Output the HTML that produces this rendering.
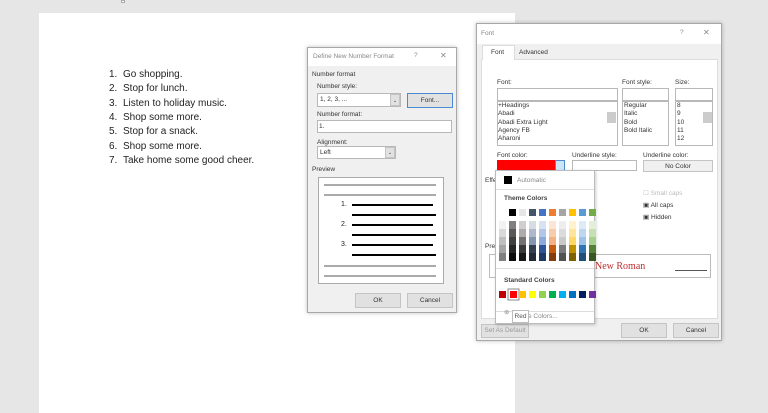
<!DOCTYPE html>
<html><head><meta charset="utf-8"><style>
*{margin:0;padding:0;box-sizing:border-box}
body{width:768px;height:402px;overflow:hidden;background:#e6e6e6;font-family:"Liberation Sans",sans-serif;position:relative;font-size:6.5px;color:#333}
.a{position:absolute}
.page{left:39px;top:13px;width:476px;height:400px;background:#fff}
.li{position:absolute;left:109px;font-size:10px;color:#222}
.li span{position:absolute;left:14px;white-space:nowrap}
.dlg{background:#f0f0f0;border:1px solid #a8a8a8;box-shadow:0 0 4px rgba(0,0,0,.25)}
.inp{background:#fff;border:1px solid #b8b8b8}
.btn{background:#e1e1e1;border:1px solid #c4c4c4;text-align:center;color:#333}
.t{white-space:nowrap;position:absolute}
.ln{position:absolute;height:2px;background:#000}
.gl{position:absolute;height:2px;background:#aaa}
</style></head><body>
<div class="a page"></div>
<div class="a" style="left:121px;top:0;width:4px;height:3px;border:1px solid #aaa;background:#fff"></div>
<div class="li" style="top:69px">1.<span>Go shopping.</span></div>
<div class="li" style="top:83px">2.<span>Stop for lunch.</span></div>
<div class="li" style="top:98px">3.<span>Listen to holiday music.</span></div>
<div class="li" style="top:112px">4.<span>Shop some more.</span></div>
<div class="li" style="top:126px">5.<span>Stop for a snack.</span></div>
<div class="li" style="top:141px">6.<span>Shop some more.</span></div>
<div class="li" style="top:155px">7.<span>Take home some good cheer.</span></div>

<div class="a dlg" style="left:307px;top:47px;width:150px;height:266px">
 <div class="a" style="left:0;top:0;width:148px;height:18px;background:#fff"></div>
 <div class="t" style="left:5px;top:5px;color:#888">Define New Number Format</div>
 <div class="t" style="left:106px;top:4px;color:#888">?</div>
 <div class="t" style="left:132px;top:3px;color:#888;font-size:8px">✕</div>
 <div class="t" style="left:4px;top:23px">Number format</div>
 <div class="t" style="left:9px;top:35px">Number style:</div>
 <div class="a inp" style="left:9px;top:45px;width:84px;height:14px"></div>
 <div class="t" style="left:12px;top:48px">1, 2, 3, ...</div>
 <div class="a btn" style="left:82px;top:46px;width:10px;height:12px;font-size:5px;line-height:12px">⌄</div>
 <div class="a btn" style="left:99px;top:45px;width:46px;height:15px;border-color:#4a8ad0;line-height:13px">Font...</div>
 <div class="t" style="left:9px;top:63px">Number format:</div>
 <div class="a inp" style="left:9px;top:72px;width:135px;height:13px"></div>
 <div class="t" style="left:11px;top:75px">1.</div>
 <div class="t" style="left:9px;top:91px">Alignment:</div>
 <div class="a inp" style="left:9px;top:98px;width:79px;height:13px"></div>
 <div class="t" style="left:12px;top:101px">Left</div>
 <div class="a btn" style="left:77px;top:99px;width:10px;height:11px;font-size:5px;line-height:11px">⌄</div>
 <div class="t" style="left:4px;top:118px">Preview</div>
 <div class="a" style="left:10px;top:129px;width:126px;height:107px;background:#fff;border:1px solid #aaa">
  <div class="gl" style="left:5px;top:6px;width:112px"></div>
  <div class="gl" style="left:5px;top:16px;width:112px"></div>
  <div class="t" style="left:22px;top:23px;font-size:7px;color:#222">1.</div>
  <div class="ln" style="left:33px;top:26px;width:81px"></div>
  <div class="ln" style="left:33px;top:36px;width:84px"></div>
  <div class="t" style="left:22px;top:43px;font-size:7px;color:#222">2.</div>
  <div class="ln" style="left:33px;top:46px;width:81px"></div>
  <div class="ln" style="left:33px;top:56px;width:84px"></div>
  <div class="t" style="left:22px;top:63px;font-size:7px;color:#222">3.</div>
  <div class="ln" style="left:33px;top:66px;width:81px"></div>
  <div class="ln" style="left:33px;top:76px;width:84px"></div>
  <div class="gl" style="left:5px;top:87px;width:112px"></div>
  <div class="gl" style="left:5px;top:97px;width:112px"></div>
 </div>
 <div class="a btn" style="left:47px;top:245px;width:46px;height:15px;line-height:13px">OK</div>
 <div class="a btn" style="left:99px;top:245px;width:46px;height:15px;line-height:13px">Cancel</div>
</div>

<div class="a dlg" style="left:476px;top:23px;width:246px;height:318px">
 <div class="a" style="left:0;top:0;width:244px;height:20px;background:#fff"></div>
 <div class="t" style="left:4px;top:6px;color:#888">Font</div>
 <div class="t" style="left:203px;top:5px;color:#888">?</div>
 <div class="t" style="left:226px;top:4px;color:#888;font-size:8px">✕</div>
 <div class="a" style="left:4px;top:35px;width:237px;height:260px;background:#fff;border:1px solid #ddd"></div>
 <div class="a" style="left:5px;top:21px;width:33px;height:15px;background:#fff;border:1px solid #ddd;border-bottom:none"></div>
 <div class="t" style="left:14px;top:25px">Font</div>
 <div class="t" style="left:42px;top:25px">Advanced</div>
 <div class="t" style="left:20px;top:55px">Font:</div>
 <div class="a inp" style="left:20px;top:64px;width:121px;height:13px"></div>
 <div class="a inp" style="left:20px;top:77px;width:121px;height:45px"></div>
 <div class="t" style="left:21px;top:78px;line-height:8.3px">+Headings<br>Abadi<br>Abadi Extra Light<br>Agency FB<br>Aharoni</div>
 <div class="a" style="left:130px;top:88px;width:9px;height:11px;background:#ccc"></div>
 <div class="t" style="left:145px;top:55px">Font style:</div>
 <div class="a inp" style="left:145px;top:64px;width:47px;height:13px"></div>
 <div class="a inp" style="left:145px;top:77px;width:47px;height:45px"></div>
 <div class="t" style="left:147px;top:78px;line-height:8.3px">Regular<br>Italic<br>Bold<br>Bold Italic</div>
 <div class="t" style="left:198px;top:55px">Size:</div>
 <div class="a inp" style="left:198px;top:64px;width:38px;height:13px"></div>
 <div class="a inp" style="left:198px;top:77px;width:38px;height:45px"></div>
 <div class="t" style="left:200px;top:78px;line-height:8.3px">8<br>9<br>10<br>11<br>12</div>
 <div class="a" style="left:226px;top:88px;width:9px;height:11px;background:#ccc"></div>
 <div class="t" style="left:20px;top:128px">Font color:</div>
 <div class="a" style="left:20px;top:136px;width:58px;height:11px;background:#f00"></div>
 <div class="a" style="left:78px;top:136px;width:10px;height:11px;background:#cde4f7;border:1px solid #4a8ad0"></div>
 <div class="t" style="left:95px;top:128px">Underline style:</div>
 <div class="a inp" style="left:95px;top:136px;width:65px;height:11px"></div>
 <div class="t" style="left:166px;top:128px">Underline color:</div>
 <div class="a btn" style="left:166px;top:136px;width:70px;height:12px;background:#f0f0f0;line-height:11px">No Color</div>
 <div class="t" style="left:8px;top:153px">Effe</div>
 <div class="t" style="left:8px;top:219px">Pre</div>
 <div class="t" style="left:166px;top:165px;color:#bbb">☐ Small caps</div>
 <div class="t" style="left:166px;top:177px">▣ All caps</div>
 <div class="t" style="left:166px;top:189px">▣ Hidden</div>
 <div class="a" style="left:12px;top:230px;width:222px;height:24px;background:#fff;border:1px solid #bbb"></div>
 <div class="t" style="left:118px;top:237px;font-family:'Liberation Serif',serif;font-size:10px;color:#c03030">New Roman</div>
 <div class="a" style="left:198px;top:246px;width:32px;height:1px;background:#555"></div>
 <div class="a btn" style="left:4px;top:300px;width:48px;height:14px;color:#999;line-height:12px">Set As Default</div>
 <div class="a btn" style="left:144px;top:299px;width:46px;height:15px;line-height:13px">OK</div>
 <div class="a btn" style="left:196px;top:299px;width:46px;height:15px;line-height:13px">Cancel</div>
</div>

<div class="a" style="left:495px;top:170px;width:100px;height:154px;background:#fff;border:1px solid #bbb;box-shadow:1px 1px 3px rgba(0,0,0,.2)">
 <div class="a" style="left:8px;top:5px;width:8px;height:8px;background:#000"></div>
 <div class="t" style="left:21px;top:6px;color:#888">Automatic</div>
 <div class="a" style="left:0;top:18px;width:98px;height:1px;background:#ddd"></div>
 <div class="t" style="left:8px;top:24px;font-weight:bold;color:#444">Theme Colors</div>
 <div class="a" style="left:0;top:140px;width:98px;height:1px;background:#ddd"></div>
 <div class="a" style="left:0;top:97px;width:98px;height:1px;background:#ddd"></div>
 <div class="t" style="left:8px;top:106px;font-weight:bold;color:#444">Standard Colors</div>
 <div class="t" style="left:8px;top:137px;color:#888">⊛</div>
 <div class="t" style="left:32px;top:142px;color:#888">e Colors...</div>
 <div class="a" style="left:16px;top:139px;width:17px;height:13px;background:#fff;border:1px solid #bbb;font-size:6.5px;text-align:center;line-height:11px;color:#555">Red</div>
 <svg class="a" style="left:0;top:0" width="100" height="140">
  <rect x="3" y="38" width="7" height="7" fill="#fff"/>
  <rect x="13" y="38" width="7" height="7" fill="#000"/>
  <rect x="23" y="38" width="7" height="7" fill="#e7e6e6"/>
  <rect x="33" y="38" width="7" height="7" fill="#44546a"/>
  <rect x="43" y="38" width="7" height="7" fill="#4472c4"/>
  <rect x="53" y="38" width="7" height="7" fill="#ed7d31"/>
  <rect x="63" y="38" width="7" height="7" fill="#a5a5a5"/>
  <rect x="73" y="38" width="7" height="7" fill="#ffc000"/>
  <rect x="83" y="38" width="7" height="7" fill="#5b9bd5"/>
  <rect x="93" y="38" width="7" height="7" fill="#70ad47"/>
  <g>
   <rect x="3" y="50" width="7" height="8" fill="#f2f2f2"/><rect x="3" y="58" width="7" height="8" fill="#d9d9d9"/><rect x="3" y="66" width="7" height="8" fill="#bfbfbf"/><rect x="3" y="74" width="7" height="8" fill="#a6a6a6"/><rect x="3" y="82" width="7" height="8" fill="#808080"/>
   <rect x="13" y="50" width="7" height="8" fill="#808080"/><rect x="13" y="58" width="7" height="8" fill="#595959"/><rect x="13" y="66" width="7" height="8" fill="#404040"/><rect x="13" y="74" width="7" height="8" fill="#262626"/><rect x="13" y="82" width="7" height="8" fill="#0d0d0d"/>
   <rect x="23" y="50" width="7" height="8" fill="#d0cece"/><rect x="23" y="58" width="7" height="8" fill="#aeabab"/><rect x="23" y="66" width="7" height="8" fill="#757171"/><rect x="23" y="74" width="7" height="8" fill="#3a3838"/><rect x="23" y="82" width="7" height="8" fill="#171616"/>
   <rect x="33" y="50" width="7" height="8" fill="#d6dce4"/><rect x="33" y="58" width="7" height="8" fill="#adb9ca"/><rect x="33" y="66" width="7" height="8" fill="#8496b0"/><rect x="33" y="74" width="7" height="8" fill="#333f4f"/><rect x="33" y="82" width="7" height="8" fill="#222a35"/>
   <rect x="43" y="50" width="7" height="8" fill="#d9e2f3"/><rect x="43" y="58" width="7" height="8" fill="#b4c6e7"/><rect x="43" y="66" width="7" height="8" fill="#8eaadb"/><rect x="43" y="74" width="7" height="8" fill="#2f5496"/><rect x="43" y="82" width="7" height="8" fill="#1f3864"/>
   <rect x="53" y="50" width="7" height="8" fill="#fbe5d5"/><rect x="53" y="58" width="7" height="8" fill="#f7cbac"/><rect x="53" y="66" width="7" height="8" fill="#f4b183"/><rect x="53" y="74" width="7" height="8" fill="#c55a11"/><rect x="53" y="82" width="7" height="8" fill="#833c0b"/>
   <rect x="63" y="50" width="7" height="8" fill="#ededed"/><rect x="63" y="58" width="7" height="8" fill="#dbdbdb"/><rect x="63" y="66" width="7" height="8" fill="#c9c9c9"/><rect x="63" y="74" width="7" height="8" fill="#7b7b7b"/><rect x="63" y="82" width="7" height="8" fill="#525252"/>
   <rect x="73" y="50" width="7" height="8" fill="#fff2cc"/><rect x="73" y="58" width="7" height="8" fill="#fee599"/><rect x="73" y="66" width="7" height="8" fill="#ffd965"/><rect x="73" y="74" width="7" height="8" fill="#bf9000"/><rect x="73" y="82" width="7" height="8" fill="#7f6000"/>
   <rect x="83" y="50" width="7" height="8" fill="#deebf6"/><rect x="83" y="58" width="7" height="8" fill="#bdd7ee"/><rect x="83" y="66" width="7" height="8" fill="#9cc3e5"/><rect x="83" y="74" width="7" height="8" fill="#2e75b5"/><rect x="83" y="82" width="7" height="8" fill="#1e4e79"/>
   <rect x="93" y="50" width="7" height="8" fill="#e2efd9"/><rect x="93" y="58" width="7" height="8" fill="#c5e0b3"/><rect x="93" y="66" width="7" height="8" fill="#a8d08d"/><rect x="93" y="74" width="7" height="8" fill="#538135"/><rect x="93" y="82" width="7" height="8" fill="#375623"/>
  </g>
  <rect x="3" y="120" width="7" height="7" fill="#c00000"/>
  <rect x="12" y="118" width="11" height="11" fill="none" stroke="#888"/>
  <rect x="14" y="120" width="7" height="7" fill="#ff0000"/>
  <rect x="23" y="120" width="7" height="7" fill="#ffc000"/>
  <rect x="33" y="120" width="7" height="7" fill="#ffff00"/>
  <rect x="43" y="120" width="7" height="7" fill="#92d050"/>
  <rect x="53" y="120" width="7" height="7" fill="#00b050"/>
  <rect x="63" y="120" width="7" height="7" fill="#00b0f0"/>
  <rect x="73" y="120" width="7" height="7" fill="#0070c0"/>
  <rect x="83" y="120" width="7" height="7" fill="#002060"/>
  <rect x="93" y="120" width="7" height="7" fill="#7030a0"/>
 </svg>
</div>
</body></html>
